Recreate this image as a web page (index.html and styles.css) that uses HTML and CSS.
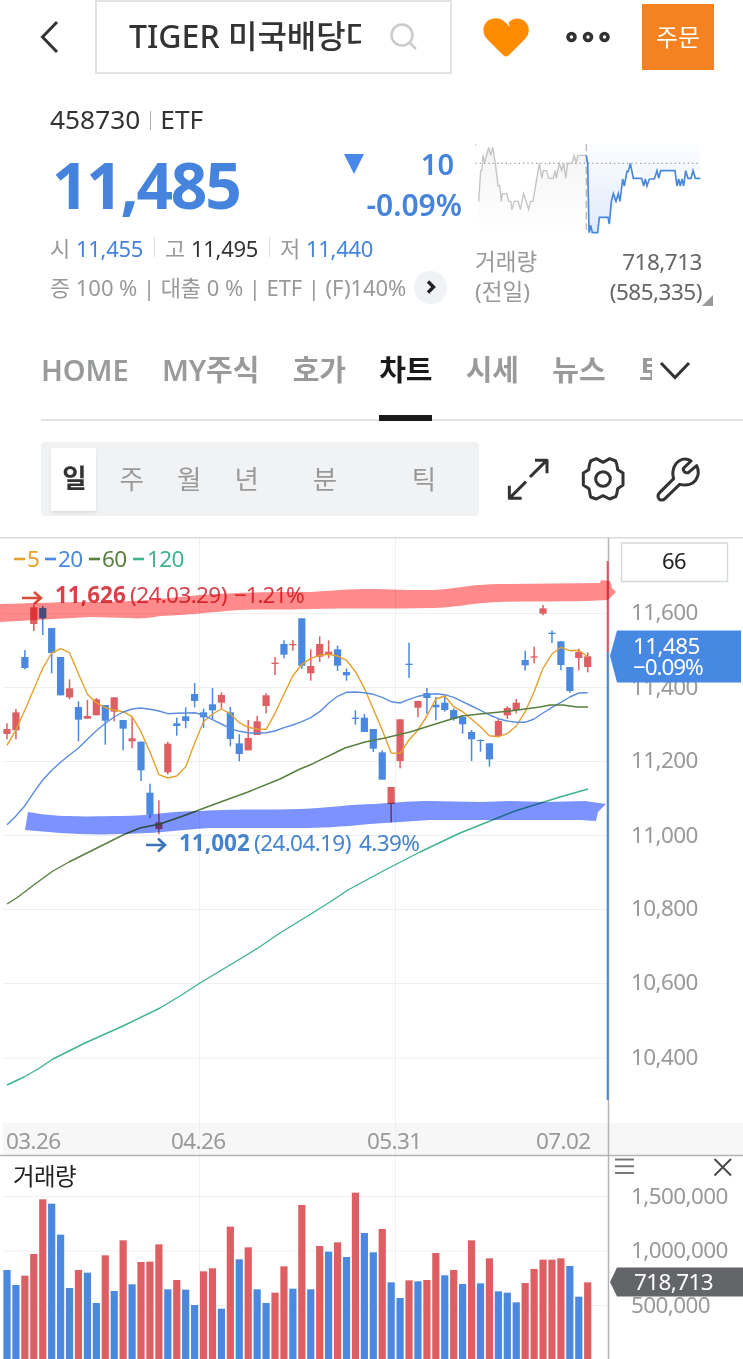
FILE: index.html
```html
<!DOCTYPE html>
<html lang="ko">
<head>
  <meta charset="UTF-8" />
  <meta name="viewport" content="width=device-width, initial-scale=1.0" />
  <title>TIGER 미국배당</title>
  <link rel="stylesheet" href="styles.css">
</head>
<body>

<header class="topbar">
  <svg class="back" width="20" height="34" viewBox="0 0 20 34"><path d="M17 2 2.500 17 17 32" /></svg>
  <div class="search">
    <span class="search--name">TIGER 미국배당다우존스</span>
    <svg width="28" height="28" viewBox="0 0 28 28"><circle cx="12" cy="12" r="10.500" /><path d="M19.500 19.500 26 26" /></svg>
  </div>
  <svg class="heart" width="46" height="39" viewBox="0 0 46 39"><path d="M23 38.500C21.500 38.500 20.500 37.500 19 36L4 21C-1 15.500-.500 8 3.500 4 9-1.500 18-.500 22.500 4.500L27 9 25.500 4.500C31-1 38-.500 42.500 4 47 8.500 47 15.500 42 21L27 36C25.500 37.500 24.500 38.500 23 38.500Z" /></svg>
  <svg class="more" width="44" height="12" viewBox="0 0 44 12"><circle cx="5.500" cy="6" r="3.500" /><circle cx="22" cy="6" r="3.500" /><circle cx="38.500" cy="6" r="3.500" /></svg>
  <button class="order">주문</button>
</header>

<section class="quote">
  <div class="quote--left">
    <div class="code">458730 <i></i> ETF</div>
    <div class="price">
      <strong class="price--now">11,485</strong>
      <span class="price--arrow"></span>
      <div class="price--change">
        <span class="price--diff">10</span>
        <span>-0.09%</span>
      </div>
    </div>
    <div class="ohlc">
      <span>시 <b class="down">11,455</b></span><i></i>
      <span>고 <b>11,495</b></span><i></i>
      <span>저 <b class="down">11,440</b></span>
    </div>
    <div class="info">
      <span>증 100 % | 대출 0 % | ETF | (F)140%</span>
      <button class="info--more"><svg width="10" height="14" viewBox="0 0 10 14"><path d="M2 1.500 7.500 7 2 12.500" /></svg></button>
    </div>
  </div>
  <div class="quote--right">
    <svg class="spark" width="234" height="100" viewBox="300 420 702 300">
      <defs>
        <linearGradient id="grayFade" x1="0" y1="0" x2="0" y2="1"><stop offset="0" stop-color="#f4f4f4" /><stop offset="1" stop-color="#fff" /></linearGradient>
        <linearGradient id="blueFade" gradientUnits="userSpaceOnUse" x1="0" y1="430" x2="0" y2="700"><stop offset="0" stop-color="#fcfdff" /><stop offset="1" stop-color="#dfeafa" /></linearGradient>
      </defs>
      <path fill="url(#grayFade)" d="M320 605 331 466 347 450H365L387 582H405L420 628H473L500 490 520 535 560 500 620 466H643V700H320Z" />
      <path fill="url(#blueFade)" d="M643 432H985V512H910L865 512 820 537 775 490 740 580 712 652H682L676 698H652Z" />
      <path class="spark--dots" d="M310 490H985M310 434H312" />
      <path class="spark--split" d="M643 432V690" />
      <path class="spark--prev" d="M320 605 326 512 330 510 333 466 338 488 344 466 350 442 356 466 362 442 370 490 378 558 383 556 388 604 391 581H404L410 604H416L420 629 427 604H439L445 629 455 581 470 628 475 604H483L502 490 510 535 514 512H524L530 535H544L550 512 553 535 562 490 569 512 575 490 581 535 587 490H601L606 466 613 488 618 466H643" />
      <path class="spark--now" d="M643 466 647 490 651 698 656 676 661 698H677L682 652H708L712 672 718 604 724 581 732 604 739 581 744 604 752 537 757 558 765 514H769L775 490 784 535H809L815 558 820 537 825 558 832 537H847L855 512 860 535 866 512H909L915 558 920 537 925 558 930 537 935 558 941 512 948 535H957L963 512 970 535H985" />
    </svg>
    <div class="vol"><span>거래량</span><b>718,713</b></div>
    <div class="vol"><span>(전일)</span><b>(585,335)</b></div>
    <span class="corner"></span>
  </div>
</section>

<nav class="tabs">
  <a>HOME</a>
  <a>MY주식</a>
  <a>호가</a>
  <a class="tabs--on">차트</a>
  <a>시세</a>
  <a>뉴스</a>
  <a class="tabs--cut">토론</a>
  <svg width="34" height="22" viewBox="0 0 34 22"><path d="M3 3 17 17.500 31 3" /></svg>
</nav>

<div class="tools">
  <div class="period">
    <span class="period--on">일</span>
    <span>주</span>
    <span>월</span>
    <span>년</span>
    <span class="period--wide">분</span>
    <span class="period--wide">틱</span>
  </div>
  <svg width="42" height="42" viewBox="37 51 126 126"><path d="M106 108 156 58M121 58H157V97M94 122 44 172M44 134V172H81" /></svg>
  <svg width="44" height="44" viewBox="257 50 132 132"><path d="M303 55 323 66 343 55 361 62C366 74 366 82 367 88L383 98V134L367 145C366 156 364 164 361 169L343 176 323 166 303 176 286 170C283 160 283 152 281 145L264 134V98L280 88C281 78 282 70 286 62Z" /><circle cx="323" cy="116" r="22" /></svg>
  <svg width="45" height="45" viewBox="480 48 135 135"><path d="M585 60 562 82C561 91 567 97 577 95L602 74C612 95 605 116 590 126 578 133 562 133 551 130L507 173C500 180 490 178 487 170 484 162 487 159 491 155L533 113C527 95 532 70 550 59 562 52 575 53 585 60Z" /></svg>
</div>

<svg class="chart" width="743" height="822" viewBox="0 537 743 822">
  <!-- axis band and frame -->
  <rect x="3" y="1123" width="740" height="32" fill="#f7f7f7" />
  <path class="grid" d="M3 613.500H607M3 687.500H607M3 761.500H607M3 835.500H607M3 909.500H607M3 983.500H607M3 1058H607M199.500 538V1359M395.500 538V1359M3 1196.500H607M3 1251H607M3 1305.500H607" />
  <path stroke="#dcdcdc" stroke-width="1.500" d="M0 537.700H743" />
  <path stroke="#b4b4b4" stroke-width="1.500" d="M0 1155.500H743M608.500 538V1359" />

  <g id="volume"></g>
  <g id="candles"></g>

  <g class="average">
    <polyline id="ma5" stroke="#e5a02f" />
    <polyline id="ma20" stroke="#5b8ddc" />
    <polyline stroke="#587e3e" points="7,904 18,897 35,884 53,871 69,862 85,854 123,835 140,828 160,824 183,816 215,804 248,792 280,779 300,769 310,765 345,748 365,742 385,738 410,732 445,721 462,716 480,714 510,711 540,707 550,705 563,705 577,707 588,707" />
    <polyline stroke="#3eb489" points="7,1085 24,1077 38,1069 53,1059 85,1043 123,1026 160,1008 180,996 200,983 240,959 258,948 280,933 306,917 330,902 348,890 385,870 420,852 460,833 500,817 515,811 560,797 588,789" />
  </g>

  <!-- legend -->
  <g class="legend">
    <path stroke="#e5a02f" d="M14 559H25" /><text x="27" y="567" fill="#e5a02f">5</text>
    <path stroke="#4b89e0" d="M45 559H56" /><text x="58" y="567" fill="#4b89e0">20</text>
    <path stroke="#587e3e" d="M89 559H100" /><text x="102" y="567" fill="#587e3e">60</text>
    <path stroke="#3eb489" d="M133 559H144" /><text x="147" y="567" fill="#3eb489">120</text>
  </g>

  <!-- high and low of the range -->
  <g class="mark mark--high">
    <path d="M22 598H41M34 592 41 598 34 604" />
    <text x="55" y="603"><tspan class="mark--price">11,626</tspan><tspan x="130">(24.03.29)</tspan><tspan x="234" class="mark--rate">−1.21%</tspan></text>
  </g>
  <g class="mark mark--low">
    <path d="M146 845H165M158 838.500 165 845 158 851.500" />
    <text x="179" y="851"><tspan class="mark--price">11,002</tspan><tspan x="254">(24.04.19)</tspan><tspan x="359">4.39%</tspan></text>
  </g>

  <path stroke="#4b89d8" stroke-width="2" d="M607.700 652V1100" />
  <path stroke="#e0545c" stroke-width="2" d="M607.700 561V652" />

  <!-- highlighter strokes -->
  <path class="marker" fill="#ff8a8c" d="M0 604C40 603 60 602 90 602 130 602 150 600 200 595 240 592 280 592 310 592 340 590 350 589 375 589 400 590 415 590 435 590 460 588 475 584 500 584L600 583 601 580 610 581 612 588 616 592 608 600C580 602 540 601 500 602 470 603 455 608 430 608 390 609 350 608 310 609 280 610 270 609 240 610 210 612 190 615 160 616 150 618 140 619 130 618L90 617 0 622Z" />
  <path class="marker" fill="#7c93ff" d="M28 812C40 814 55 816 70 816 90 817 105 816 120 816 150 816 170 811 200 811 240 809 270 810 300 809 330 808 350 804 375 804 400 802 415 801 430 801L480 802 510 801 545 802 585 801 606 804 598 812 596 821 580 820H430C410 821 390 823 370 824 340 827 320 828 300 828H210C180 830 150 834 120 834 95 835 80 834 60 833L25 830Z" />

  <!-- price axis -->
  <rect x="621.500" y="543" width="106" height="38.500" fill="#fff" stroke="#d5dadd" stroke-width="1.500" />
  <text x="674" y="569" class="count">66</text>
  <g class="axis">
    <text x="631" y="620">11,600</text>
    <text x="631" y="694.500">11,400</text>
    <text x="631" y="768">11,200</text>
    <text x="631" y="842.500">11,000</text>
    <text x="631" y="916">10,800</text>
    <text x="631" y="990">10,600</text>
    <text x="631" y="1064.500">10,400</text>
    <text x="631" y="1204">1,500,000</text>
    <text x="631" y="1258">1,000,000</text>
    <text x="631" y="1312.500">500,000</text>
    <text x="6" y="1149">03.26</text>
    <text x="171" y="1149">04.26</text>
    <text x="367" y="1149">05.31</text>
    <text x="536" y="1149">07.02</text>
  </g>
  <path fill="#4788e3" d="M610 656 617 630.500H741V682.500H617Z" />
  <g class="tag">
    <text x="633" y="654">11,485</text>
    <text x="633" y="675" class="mark--rate">−0.09%</text>
  </g>
  <path fill="#636568" d="M610 1282 617 1267.500H743V1296.500H617Z" />
  <text class="tag" x="634" y="1290">718,713</text>

  <!-- volume pane controls -->
  <text x="13" y="1185" class="pane">거래량</text>
  <path stroke="#777" stroke-width="2" d="M615 1159.500H634M615 1166.200H634M615 1173H634" />
  <path stroke="#4a4a4a" stroke-width="2" d="M714.500 1159 731 1175.500M731 1159 714.500 1175.500" />
</svg>

<script>
  const UP = "#dd5f63";
  const DOWN = "#4a89df";
  const STEP = 8.934;

  // high, body top, body bottom, low, 1 = up
  const candles = [
    [580,597,612,628,1], [537,547,601,628,1], [360,381,414,418,0], [225,232,282,303,1],
    [228,234,265,315,0], [294,294,369,430,0], [381,381,496,496,0], [448,475,502,508,1],
    [514,531,569,634,0], [510,558,566,566,1], [504,508,556,556,1], [525,525,572,644,0],
    [502,502,545,574,1], [570,570,596,661,0], [562,625,634,655,1], [635,635,721,753,0],
    [761,788,854,864,0], [811,877,897,913,1], [635,641,727,733,1], [563,580,588,617,0],
    [532,559,573,595,0], [459,492,513,532,0], [536,547,562,594,0], [474,523,541,568,0],
    [487,495,518,536,1], [531,547,627,649,0], [613,640,672,694,0], [570,624,661,661,1],
    [558,574,615,615,1], [490,496,528,550,1], [381,398,402,435,1], [331,342,374,385,0],
    [330,342,346,362,1], [265,265,407,417,0], [358,408,430,452,1], [319,342,380,396,1],
    [331,365,375,385,1], [347,358,407,423,0], [415,426,436,452,0], [541,563,567,584,0],
    [552,563,606,606,0], [597,597,656,666,0], [661,667,749,749,0], [771,771,822,877,1],
    [568,568,693,715,1], [338,401,405,444,0], [512,513,533,562,1], [474,489,504,552,0],
    [501,524,532,571,0], [497,518,540,545,0], [535,540,567,572,0], [556,561,583,611,0],
    [600,606,628,693,0], [628,630,633,665,0], [640,640,688,710,0], [567,573,618,620,1],
    [529,534,556,567,1], [507,518,540,550,1], [362,390,406,422,0], [350,379,383,400,1],
    [225,235,251,256,1], [301,308,312,339,0], [334,334,405,421,0], [411,411,483,488,0],
    [356,366,384,421,1], [367,379,411,427,1]
  ];

  // bar top, then r(ed) or b(lue)
  const volumes = ("480b 525b 497r 432r 268r 281b 374b 534b 480r 488b 579b 436r 543b 391r 523b 456r 455r " +
    "403r 538b 510r 539b 585b 484r 475r 596b 350r 448b 412r 538b 579b 548r 469r 536b 285r 538b 408r 425b " +
    "397r 441b 248r 369b 427b 357r 517b 564b 511r 514b 510r 429r 496b 480r 522b 391r 520b 445r 544b 548b " +
    "577b 519r 477r 449r 449r 445r 468b 560b 517r").split(" ");

  const ma5 = [646,600,540,478,415,369,356,368,432,493,518,533,540,545,560,605,665,734,744,738,710,640,575,552,
    537,551,578,592,597,598,550,492,437,403,385,376,373,378,391,425,475,537,600,669,670,630,600,558,507,498,
    530,545,568,590,617,620,611,588,545,485,415,372,352,362,361,380];
  const ma20 = [884,858,827,787,750,721,697,675,654,628,602,580,561,546,537,534,538,543,551,550,549,548,555,569,
    582,595,604,608,610,608,603,593,585,575,563,545,520,499,487,486,488,493,502,515,519,508,499,494,491,494,
    502,515,528,541,555,566,573,577,577,567,549,532,517,501,489,488];

  const cx = i => 7 + i * STEP;
  const cy = v => 530 + v / 3;

  function rect(x, y, w, h, fill) {
    return `<rect x="${x.toFixed(2)}" y="${y.toFixed(2)}" width="${w}" height="${h.toFixed(2)}" fill="${fill}"/>`;
  }

  document.querySelector('#candles').innerHTML = candles.map(([high, top, bottom, low, up], i) => {
    const fill = up ? UP : DOWN;
    return rect(cx(i) - 0.75, cy(high), 1.5, (low - high) / 3, fill) +
      rect(cx(i) - 3.6, cy(top), 7.2, (bottom - top) / 3, fill);
  }).join('');

  document.querySelector('#volume').innerHTML = volumes.map((bar, i) => {
    const y = 1110 + parseInt(bar) / 3;
    return rect(cx(i) - 3.6, y, 7.2, 1359 - y, bar.endsWith('r') ? UP : DOWN);
  }).join('');

  const line = values => values.map((v, i) => `${cx(i).toFixed(1)},${cy(v).toFixed(1)}`).join(' ');
  document.querySelector('#ma5').setAttribute('points', line(ma5));
  document.querySelector('#ma20').setAttribute('points', line(ma20));
</script>

</body>
</html>
```
FILE: styles.css
```css
* {
  box-sizing: border-box;
}

body {
  margin: 0;
  width: 743px;
  height: 1359px;
  overflow: hidden;
  background-color: #fff;
  font-family: "Noto Sans", "Noto Sans CJK KR", sans-serif;
  color: #333;
}

svg {
  display: block;
  flex: none;
  fill: none;
}

button {
  font-family: inherit;
  border: none;
  padding: 0;
}

b {
  font-weight: 400;
}

/* top bar */
.topbar {
  display: flex;
  align-items: center;
  height: 74px;
  padding-left: 40px;
}

.back {
  stroke: #333;
  stroke-width: 3;
}

.search {
  display: flex;
  align-items: center;
  width: 357px;
  height: 74px;
  margin-left: 35px;
  padding-left: 32px;
  border: 2px solid #dfe3e5;
}

.search--name {
  width: 232px;
  margin: -3px 29px 0 0;
  overflow: hidden;
  white-space: nowrap;
  font-size: 32px;
  line-height: 48px;
  font-weight: 500;
}

.search svg {
  stroke: #c9cbcd;
  stroke-width: 2.5;
}

.heart {
  margin-left: 31px;
  fill: #ff8c00;
}

.more {
  margin-left: 37px;
  stroke: #333;
  stroke-width: 3.6;
}

.order {
  width: 72px;
  height: 66px;
  margin-left: 32px;
  padding-bottom: 4px;
  background-color: #f58220;
  color: #fff;
  font-size: 24px;
}

/* quote */
.quote {
  display: grid;
  grid-template-columns: 412px 227px;
  gap: 13px;
  height: 256px;
  padding: 29px 0 0 50px;
}

.code {
  display: flex;
  align-items: center;
  height: 31px;
  font-size: 26.3px;
}

.code i {
  width: 1px;
  height: 19px;
  margin: 3px 9px 0 10px;
  background-color: #aaa;
}

.price {
  display: flex;
  height: 99px;
  color: #4583dc;
  font-weight: 700;
}

.price--now {
  width: 200px;
  padding-left: 2px;
  font-size: 64px;
  font-weight: 700;
  line-height: 102px;
  letter-spacing: -2.3px;
}

.price--arrow {
  width: 20px;
  height: 20px;
  margin: 20px 0 0 94px;
  background-color: #4788e8;
  clip-path: polygon(0 0, 100% 0, 50% 100%);
}

.price--change {
  display: flex;
  flex-direction: column;
  flex: 1;
  padding-top: 9px;
  text-align: right;
  font-size: 30px;
  font-weight: 600;
  line-height: 41px;
}

.price--diff {
  padding-right: 8px;
  font-size: 29px;
}

.ohlc {
  display: flex;
  align-items: center;
  height: 27px;
  font-size: 22px;
  color: #999;
}

.ohlc b {
  letter-spacing: -0.3px;
  color: #333;
}

.ohlc .down {
  color: #4583dc;
}

.ohlc i {
  width: 1px;
  height: 20px;
  margin: 0 10px 0 11px;
  background-color: #ddd;
}

.info {
  display: flex;
  align-items: center;
  gap: 8px;
  height: 54px;
  white-space: nowrap;
  font-size: 22px;
  letter-spacing: -0.06px;
  color: #999;
}

.info span {
  margin-top: -2px;
}

.info--more {
  display: grid;
  place-items: center;
  width: 33px;
  height: 33px;
  border-radius: 50%;
  background-color: #f1f2f5;
}

.info--more path {
  stroke: #222;
  stroke-width: 3.4;
}

.quote--right {
  position: relative;
  padding-top: 37px;
}

.spark {
  margin-left: -3px;
  margin-bottom: 7px;
  stroke-width: 4;
}

.spark--dots {
  stroke: #999fab;
  stroke-dasharray: 4 9;
}

.spark--split {
  stroke: #b8b8bc;
  stroke-dasharray: 22 12;
}

.spark--prev {
  stroke: #c2c4c6;
}

.spark--now {
  stroke: #4788dc;
  stroke-width: 5;
}

.vol {
  display: flex;
  justify-content: space-between;
  height: 30px;
  line-height: 30px;
  font-size: 22.5px;
  color: #999;
}

.vol b {
  color: #666;
  letter-spacing: -0.5px;
}

.corner {
  position: absolute;
  left: 227px;
  top: 192px;
  width: 11px;
  height: 11px;
  background-color: #999;
  clip-path: polygon(100% 0, 100% 100%, 0 100%);
}

/* tabs */
.tabs {
  display: flex;
  gap: 33.4px;
  height: 91px;
  margin-left: 41px;
  border-bottom: 2px solid #e2e3e4;
  font-size: 29px;
  font-weight: 600;
  line-height: 80px;
  letter-spacing: -0.1px;
  white-space: nowrap;
  color: #999b9b;
}

.tabs a {
  height: 91px;
}

.tabs--on {
  border-bottom: 6px solid #1a1a1a;
  color: #1a1a1a;
}

.tabs--cut {
  width: 13px;
  overflow: hidden;
}

.tabs svg {
  margin: 30px 0 0 -27px;
  stroke: #333;
  stroke-width: 3;
}

/* period and tool buttons */
.tools {
  display: flex;
  align-items: center;
  height: 116px;
  padding-left: 41px;
}

.period {
  display: flex;
  align-items: center;
  width: 438px;
  height: 74px;
  margin-right: 28px;
  padding-left: 10px;
  border-radius: 4px;
  background-color: #f1f2f4;
  font-size: 26.5px;
  line-height: 60px;
  text-align: center;
  color: #999;
}

.period span {
  width: 57.5px;
}

.period .period--on {
  width: 45px;
  height: 63px;
  margin-right: 7px;
  padding-left: 2px;
  background-color: #fff;
  box-shadow: 0 2px 3px #dcdde0;
  font-weight: 700;
  color: #333;
}

.period .period--wide {
  width: 99px;
}

.tools > svg {
  margin-right: 31.5px;
  stroke: #333;
  stroke-width: 9;
  stroke-linejoin: round;
}

/* chart */
.chart text {
  font-size: 22.5px;
  letter-spacing: -0.6px;
}

.grid {
  stroke: #f0f0f0;
}

.average {
  stroke-width: 1.4;
  stroke-linejoin: round;
}

.legend path {
  stroke-width: 2.6;
}

.mark path {
  stroke-width: 2.6;
}

.mark--high {
  fill: #d8434b;
}

.mark--high path {
  stroke: #dc4a35;
  fill: none;
}

.mark--low {
  fill: #4583cf;
}

.mark--low path {
  stroke: #3c74b8;
  fill: none;
}

.mark--price {
  font-weight: 700;
  letter-spacing: 0;
}

.chart .mark--rate {
  letter-spacing: -1.1px;
}

.marker {
  mix-blend-mode: multiply;
}

.axis {
  fill: #999;
}

.tag {
  fill: #fff;
}

.chart .count {
  fill: #222;
  font-size: 22px;
  text-anchor: middle;
}

.chart .pane {
  fill: #222;
  font-size: 23.5px;
}
```
